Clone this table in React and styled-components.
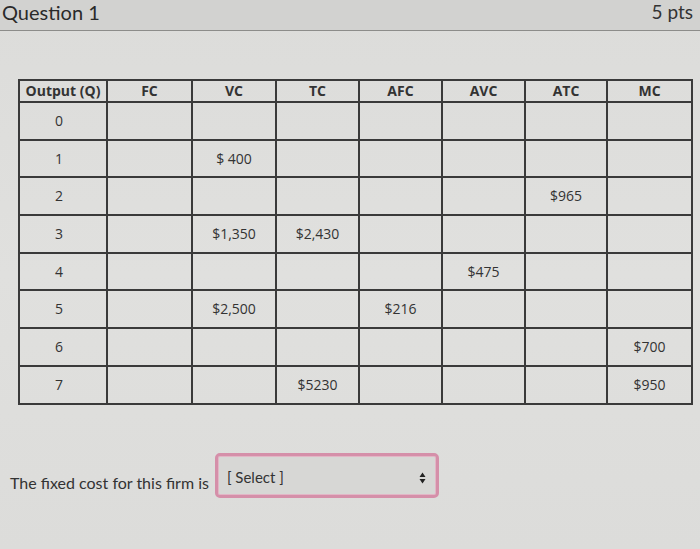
import React from 'react';
import styled, { createGlobalStyle } from 'styled-components';

const GlobalStyle = createGlobalStyle`
  html, body {
    margin: 0;
    padding: 0;
    background: #dddddb;
  }
  body {
    font-family: Lato, "Open Sans", sans-serif;
    color: #2e2e2e;
  }
`;

const Page = styled.div`
  width: 700px;
  height: 549px;
  overflow: hidden;
  background: linear-gradient(180deg, #dcdcda 0%, #e0e0de 50%, #dcdcda 100%);
`;

const Header = styled.header`
  height: 30px;
  display: flex;
  justify-content: space-between;
  align-items: flex-start;
  padding: 0 7px 0 2px;
  background: #d2d2d0;
  border-bottom: 1px solid #8c8c8a;
`;

const Title = styled.h2`
  margin: 0;
  font-size: 20px;
  font-weight: 400;
  line-height: 24px;
  color: #2a2a2a;
`;

const Points = styled.span`
  margin-top: 1px;
  font-size: 19px;
  line-height: 22px;
  color: #333;
`;

const Body = styled.div`
  padding: 48px 0 0 18px;
`;

const Table = styled.table`
  border-collapse: collapse;
  table-layout: fixed;
  width: 673px;
  font-family: "Open Sans", Lato, sans-serif;
  font-size: 14px;
  color: #333;
`;

const HeadCell = styled.th`
  height: 20px;
  padding: 0;
  border: 2px solid #3a3a3a;
  font-weight: 700;
  font-size: 14px;
  line-height: 18px;
  text-align: center;
  vertical-align: middle;
`;

const Cell = styled.td`
  height: 35.7px;
  padding: 0 ${p => (p.$shift ? '8px' : '0')} 0 0;
  border: 2px solid #3a3a3a;
  line-height: 30px;
  text-align: center;
  vertical-align: middle;
  white-space: nowrap;
`;

const Prompt = styled.div`
  display: flex;
  align-items: center;
  gap: 6px;
  padding: 48px 0 0 10px;
`;

const PromptText = styled.span`
  margin-top: 14px;
  font-size: 16px;
  color: #333;
`;

const SelectBox = styled.div`
  width: 218px;
  height: 39px;
  box-sizing: content-box;
  display: flex;
  align-items: flex-start;
  justify-content: space-between;
  padding: 0;
  border: 3px solid #d58fa9;
  border-radius: 5px;
  background: #d7d7d5;
  box-shadow: inset 0 0 0 1px #e2b6c6;
`;

const SelectLabel = styled.span`
  margin: 12px 0 0 9px;
  font-size: 15px;
  color: #333;
`;

const Arrows = styled.svg`
  margin: 16px 10px 0 0;
`;

const widths = [88, 85, 84, 83, 83, 83, 82, 85];
const heads = ['Output (Q)', 'FC', 'VC', 'TC', 'AFC', 'AVC', 'ATC', 'MC'];

const rows = [
  ['0', '', '', '', '', '', '', ''],
  ['1', '', '$ 400', '', '', '', '', ''],
  ['2', '', '', '', '', '', '$965', ''],
  ['3', '', '$1,350', '$2,430', '', '', '', ''],
  ['4', '', '', '', '', '$475', '', ''],
  ['5', '', '$2,500', '', '$216', '', '', ''],
  ['6', '', '', '', '', '', '', '$700'],
  ['7', '', '', '$5230', '', '', '', '$950'],
];

export default function App() {
  return (
    <Page>
      <GlobalStyle />
      <Header>
        <Title>Question 1</Title>
        <Points>5 pts</Points>
      </Header>
      <Body>
        <Table>
          <colgroup>
            {widths.map((w, i) => (
              <col key={i} style={{ width: w }} />
            ))}
          </colgroup>
          <thead>
            <tr>
              {heads.map(h => (
                <HeadCell key={h}>{h}</HeadCell>
              ))}
            </tr>
          </thead>
          <tbody>
            {rows.map((r, i) => (
              <tr key={i}>
                {r.map((v, j) => (
                  <Cell key={j} $shift={j === 0}>{v}</Cell>
                ))}
              </tr>
            ))}
          </tbody>
        </Table>
      </Body>
      <Prompt>
        <PromptText>The fixed cost for this firm is</PromptText>
        <SelectBox>
          <SelectLabel>[ Select ]</SelectLabel>
          <Arrows width="7" height="12" viewBox="0 0 7 12">
            <path d="M3.5 0.5 L6.5 5 L0.5 5 Z M3.5 11.5 L6.5 7 L0.5 7 Z" fill="#222" />
          </Arrows>
        </SelectBox>
      </Prompt>
    </Page>
  );
}
